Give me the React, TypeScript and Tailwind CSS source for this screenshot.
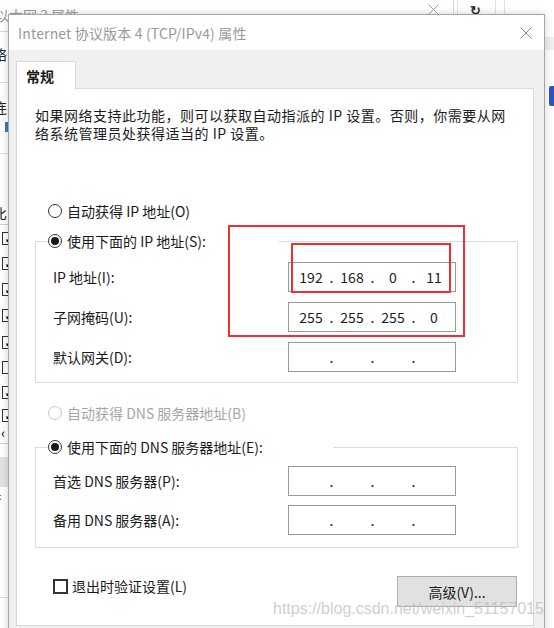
import React, { Fragment } from "react";

function Radio({ checked, disabled, label }: { checked?: boolean; disabled?: boolean; label: string }) {
  return (
    <div className="flex h-[20px] items-center">
      <span
        className={
          disabled
            ? "flex h-[14px] w-[14px] items-center justify-center rounded-full border border-[#c8c8c8] bg-white"
            : "flex h-[14px] w-[14px] items-center justify-center rounded-full border border-[#333333] bg-white"
        }
      >
        {checked ? <span className="h-[8px] w-[8px] rounded-full bg-[#1a1a1a]" /> : null}
      </span>
      <span className={disabled ? "ml-[5px] text-[#a6a6a6]" : "ml-[5px] text-[#1a1a1a]"}>{label}</span>
    </div>
  );
}

function IpBox({ parts }: { parts: string[] }) {
  return (
    <div className="flex h-[30px] w-[168px] items-center border border-[#999999] bg-white pl-[3px] text-[#1a1a1a]">
      {parts.map((p, i) => (
        <Fragment key={i}>
          {i > 0 ? <span className="flex w-[3px] justify-center">.</span> : null}
          <span className="w-[38px] text-center">{p}</span>
        </Fragment>
      ))}
    </div>
  );
}

function Row({ label, parts }: { label: string; parts: string[] }) {
  return (
    <div className="flex h-[30px] items-center pl-[17px]">
      <span className="w-[235px] text-[#1a1a1a]">{label}</span>
      <IpBox parts={parts} />
    </div>
  );
}

function BgCheck({ top, checked }: { top: number; checked: boolean }) {
  return (
    <div
      className="absolute left-[2px] flex h-[13px] w-[13px] items-center justify-center border border-[#333] bg-white text-[10px] leading-none text-[#111]"
      style={{ top }}
    >
      {checked ? "✔" : ""}
    </div>
  );
}

function BackgroundWindow() {
  const checks = [232, 257, 283, 309, 336, 361, 386, 409];
  return (
    <div className="absolute inset-0 text-[14px] leading-[18px]">
      {/* top title strip of background window */}
      <div className="absolute left-[-5px] top-[6px] whitespace-nowrap text-[#9a9a9a]">以太网 2 属性</div>
      <svg className="absolute left-[428px] top-[4px]" width="11" height="11" viewBox="0 0 11 11">
        <path d="M0.5 0.5 L10.5 10.5 M10.5 0.5 L0.5 10.5" stroke="#a0a0a0" strokeWidth="1" />
      </svg>
      <div className="absolute left-[453px] top-0 h-[14px] w-px bg-[#d8d8d8]" />
      <div className="absolute left-[457px] top-0 h-[14px] w-px bg-[#e4e4e4]" />
      <div className="absolute left-[470px] top-[1px] text-[13px] font-bold text-[#333]">↻</div>
      <div className="absolute left-[495px] top-0 h-[14px] w-px bg-[#e0e0e0]" />
      <div className="absolute left-[504px] top-0 h-[14px] w-px bg-[#e0e0e0]" />

      {/* left strip fragments */}
      <div className="absolute left-0 top-[31px] h-px w-[8px] bg-[#d6d6d6]" />
      <div className="absolute left-[-7px] top-[45px] text-[#222]">络</div>
      <div className="absolute left-0 top-[82px] h-px w-[8px] bg-[#e0e0e0]" />
      <div className="absolute left-[-7px] top-[98px] text-[#222]">连</div>
      <div className="absolute left-[5px] top-[122px] h-[10px] w-[3px] bg-[#3a78c8]" />
      <div className="absolute left-0 top-[153px] h-px w-[8px] bg-[#e0e0e0]" />
      <div className="absolute left-[-7px] top-[204px] text-[#222]">比</div>
      <div className="absolute left-0 top-[224px] h-px w-[8px] bg-[#cfcfcf]" />
      {checks.map((t, i) => (
        <BgCheck key={t} top={t} checked={i !== 5} />
      ))}
      <div className="absolute left-[1px] top-[424px] text-[13px] font-bold text-[#333]">‹</div>
      <div className="absolute left-0 top-[443px] h-px w-[8px] bg-[#cfcfcf]" />
      <div className="absolute left-0 top-[457px] h-[30px] w-[8px] bg-[#e3e3e3]" />
      <div className="absolute left-[-6px] top-[489px] text-[#8a5a00]">扌</div>
      <div className="absolute left-0 top-[597px] h-px w-[8px] bg-[#e0e0e0]" />

      {/* right strip fragments */}
      <div className="absolute left-[545px] top-[37px] h-[13px] w-[9px] bg-[#f0f0f0]" />
      <div className="absolute left-[549px] top-[86px] h-[20px] w-[8px] rounded-[2px] bg-[#2a52c9]" />
    </div>
  );
}

export default function App() {
  return (
    <div className="relative h-[628px] w-[554px] overflow-hidden bg-white font-['Noto_Sans_CJK_SC',sans-serif] text-[14px] leading-[18px]">
      <BackgroundWindow />

      {/* Dialog window */}
      <div className="absolute left-[8px] top-[14px] flex h-[640px] w-[537px] flex-col border border-[#a6a6a6] bg-[#f0f0f0] shadow-[0_0_8px_rgba(0,0,0,0.18)]">
        {/* title bar */}
        <div className="flex h-[35px] shrink-0 items-center justify-between bg-white pl-[9px] pr-[12px]">
          <span className="tracking-[0.15px] text-[#999999]">Internet 协议版本 4 (TCP/IPv4) 属性</span>
          <svg width="12" height="12" viewBox="0 0 12 12">
            <path d="M0.5 0.5 L11.5 11.5 M11.5 0.5 L0.5 11.5" stroke="#8c8c8c" strokeWidth="1" />
          </svg>
        </div>

        {/* body */}
        <div className="flex flex-col pl-[7px] pr-[10px] pt-[11px]">
          {/* tab */}
          <div className="relative z-10 -mb-px flex h-[28px] w-[60px] items-center border border-b-0 border-[#d9d9d9] bg-white pl-[9px] font-bold text-[#1a1a1a]">
            常规
          </div>

          {/* panel */}
          <div className="flex h-[538px] flex-col border border-[#d9d9d9] bg-white pl-[18px] pr-[15px] pt-[17px]">
            <p className="whitespace-nowrap tracking-[0.5px] text-[#1a1a1a]">
              如果网络支持此功能，则可以获取自动指派的 IP 设置。否则，你需要从网
              <br />
              络系统管理员处获得适当的 IP 设置。
            </p>

            <div className="mt-[59px] pl-[13px]">
              <Radio label="自动获得 IP 地址(O)" />
            </div>

            <div className="mt-[20px] flex flex-col border border-[#dcdcdc] pb-[10px]">
              <div className="-mt-[11px] ml-[12px] w-[231px] bg-white">
                <Radio checked label="使用下面的 IP 地址(S):" />
              </div>
              <div className="mt-[11px] flex flex-col gap-[10px]">
                <Row label="IP 地址(I):" parts={["192", "168", "0", "11"]} />
                <Row label="子网掩码(U):" parts={["255", "255", "255", "0"]} />
                <Row label="默认网关(D):" parts={["", "", "", ""]} />
              </div>
            </div>

            <div className="mt-[20px] pl-[13px]">
              <Radio disabled label="自动获得 DNS 服务器地址(B)" />
            </div>

            <div className="mt-[24px] flex flex-col border border-[#dcdcdc] pb-[12px]">
              <div className="-mt-[11px] ml-[12px] w-[285px] bg-white">
                <Radio checked label="使用下面的 DNS 服务器地址(E):" />
              </div>
              <div className="mt-[9px] flex flex-col gap-[9px]">
                <Row label="首选 DNS 服务器(P):" parts={["", "", "", ""]} />
                <Row label="备用 DNS 服务器(A):" parts={["", "", "", ""]} />
              </div>
            </div>

            <div className="mt-[28px] flex items-start justify-between pl-[18px] pr-px">
              <div className="mt-px flex h-[18px] items-center">
                <span className="h-[15px] w-[15px] border-2 border-[#333333] bg-white" />
                <span className="ml-[4px] text-[#1a1a1a]">退出时验证设置(L)</span>
              </div>
              <div className="flex h-[31px] w-[120px] items-center justify-center border border-[#adadad] bg-[#e1e1e1] text-[#1a1a1a]">
                高级(V)...
              </div>
            </div>
          </div>
        </div>
      </div>

      {/* red annotation boxes */}
      <div className="absolute left-[228px] top-[225px] h-[112px] w-[237px] border-2 border-[#f03030]" />
      <div className="absolute left-[291px] top-[243px] h-[50px] w-[160px] border-2 border-[#f03030]" />

      {/* watermark */}
      <div className="absolute left-[273px] top-[599px] whitespace-nowrap font-['Liberation_Sans',Arial,sans-serif] text-[16px] leading-[20px] text-[rgba(190,190,190,0.75)]">
        https://blog.csdn.net/weixin_51157015
      </div>
    </div>
  );
}
